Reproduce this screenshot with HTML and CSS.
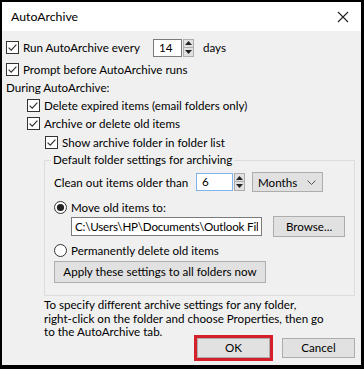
FILE: index.html
```html
<!doctype html>
<html>
  <head>
    <link rel="stylesheet" href="styles.css">
  </head>
  <body>
    <div class="dialog">
      <div class="titlebar">
        <span class="title">AutoArchive</span>
        <svg class="close" width="12" height="12" viewBox="0 0 12 12">
          <path d="M1 1 L11 11 M11 1 L1 11" stroke="#222" stroke-width="1.1" fill="none"/>
        </svg>
      </div>

      <div class="content">
        <div class="row r1">
          <svg class="check" width="13" height="13" viewBox="0 0 13 13"><rect x="0.5" y="0.5" width="12" height="12" fill="#fff" stroke="#333"/><path d="M2.6 6.6 L5.2 9.2 L10.4 3.6" stroke="#333" stroke-width="1.2" fill="none"/></svg>
          <span class="label w-run">Run AutoArchive every</span>
          <span class="spin">
            <span class="spin-box w-days">14</span>
            <span class="spin-btns">
              <span class="spin-btn"><svg width="7" height="4" viewBox="0 0 7 4"><path d="M0 4 L3.5 0 L7 4 Z" fill="#222"/></svg></span>
              <span class="spin-btn"><svg width="7" height="4" viewBox="0 0 7 4"><path d="M0 0 L3.5 4 L7 0 Z" fill="#222"/></svg></span>
            </span>
          </span>
          <span class="label after-spin">days</span>
        </div>

        <div class="row r2">
          <svg class="check" width="13" height="13" viewBox="0 0 13 13"><rect x="0.5" y="0.5" width="12" height="12" fill="#fff" stroke="#333"/><path d="M2.6 6.6 L5.2 9.2 L10.4 3.6" stroke="#333" stroke-width="1.2" fill="none"/></svg>
          <span class="label">Prompt before AutoArchive runs</span>
        </div>

        <div class="row r3">
          <span class="text">During AutoArchive:</span>
        </div>

        <div class="row r4 indent1">
          <svg class="check" width="13" height="13" viewBox="0 0 13 13"><rect x="0.5" y="0.5" width="12" height="12" fill="#fff" stroke="#333"/><path d="M2.6 6.6 L5.2 9.2 L10.4 3.6" stroke="#333" stroke-width="1.2" fill="none"/></svg>
          <span class="label">Delete expired items (email folders only)</span>
        </div>

        <div class="row r5 indent1">
          <svg class="check" width="13" height="13" viewBox="0 0 13 13"><rect x="0.5" y="0.5" width="12" height="12" fill="#fff" stroke="#333"/><path d="M2.6 6.6 L5.2 9.2 L10.4 3.6" stroke="#333" stroke-width="1.2" fill="none"/></svg>
          <span class="label">Archive or delete old items</span>
        </div>

        <div class="row r6 indent2">
          <svg class="check" width="13" height="13" viewBox="0 0 13 13"><rect x="0.5" y="0.5" width="12" height="12" fill="#fff" stroke="#333"/><path d="M2.6 6.6 L5.2 9.2 L10.4 3.6" stroke="#333" stroke-width="1.2" fill="none"/></svg>
          <span class="label">Show archive folder in folder list</span>
        </div>

        <fieldset class="group">
          <legend>Default folder settings for archiving</legend>

          <div class="row g-clean">
            <span class="text w-clean">Clean out items older than</span>
            <span class="spin">
              <span class="spin-box focus w-months">6</span>
              <span class="spin-btns">
                <span class="spin-btn"><svg width="7" height="4" viewBox="0 0 7 4"><path d="M0 4 L3.5 0 L7 4 Z" fill="#222"/></svg></span>
                <span class="spin-btn"><svg width="7" height="4" viewBox="0 0 7 4"><path d="M0 0 L3.5 4 L7 0 Z" fill="#222"/></svg></span>
              </span>
            </span>
            <span class="select">
              <span>Months</span>
              <svg width="9" height="5" viewBox="0 0 9 5"><path d="M0.5 0.5 L4.5 4.5 L8.5 0.5" stroke="#555" fill="none"/></svg>
            </span>
          </div>

          <div class="row g-move">
            <svg class="radio" width="13" height="13" viewBox="0 0 13 13"><circle cx="6.5" cy="6.5" r="6" fill="#fff" stroke="#333"/><circle cx="6.5" cy="6.5" r="3.6" fill="#222"/></svg>
            <span class="label">Move old items to:</span>
          </div>

          <div class="row g-path">
            <input class="path" type="text" value="C:\Users\HP\Documents\Outlook Files\archive.pst" readonly>
            <span class="button browse">Browse...</span>
          </div>

          <div class="row g-perm">
            <svg class="radio" width="13" height="13" viewBox="0 0 13 13"><circle cx="6.5" cy="6.5" r="6" fill="#fff" stroke="#333"/></svg>
            <span class="label">Permanently delete old items</span>
          </div>

          <div class="button apply">Apply these settings to all folders now</div>
        </fieldset>

        <p class="note">
          To specify different archive settings for any folder,<br>
          right-click on the folder and choose Properties, then go<br>
          to the AutoArchive tab.
        </p>

        <div class="actions">
          <span class="button action ok">OK</span>
          <span class="button action">Cancel</span>
        </div>
      </div>
    </div>
  </body>
</html>
```

FILE: styles.css
```css
body {
  margin: 0;
  background: #000;
}

.dialog {
  width: 364px;
  height: 369px;
  box-sizing: border-box;
  border-style: solid;
  border-color: #000;
  border-width: 2px 3px 4px 2px;
  background: #f0f0f0;
  font-family: Lato, "Noto Sans", sans-serif;
  font-size: 11.6px;
  color: #000;
  overflow: hidden;
}

.titlebar {
  height: 29px;
  background: #fff;
  display: flex;
  align-items: center;
  padding: 0 12px 0 9px;
}

.title {
  font-size: 12.3px;
}

.close {
  margin-left: auto;
}

.content {
  padding: 6px 4px 0 4px;
}

.row {
  display: flex;
  align-items: center;
  height: 18px;
  white-space: nowrap;
}

.check, .radio {
  flex: none;
}

.label {
  margin-left: 4px;
}

.r1 { height: 21px; }
.r2 { margin-top: 2px; height: 19px; }
.r3 { height: 17px; }
.r5 { height: 19px; }
.r6 { height: 19px; }

.indent1 { margin-left: 21px; }
.indent2 { margin-left: 39px; }

.w-run {
  width: 130px;
  margin-left: 4px;
}

.spin {
  display: flex;
  align-items: center;
}

.spin-box {
  height: 18px;
  box-sizing: border-box;
  border: 1px solid #7a7a7a;
  background: #fff;
  padding: 0 5px;
  line-height: 16px;
}

.spin-box.focus {
  border-color: #7eb4ea;
}

.w-days { width: 29px; }
.w-months { width: 37px; }

.spin-btns {
  display: flex;
  flex-direction: column;
  margin-left: 1px;
}

.spin-btn {
  width: 11px;
  height: 9px;
  box-sizing: border-box;
  border: 1px solid #adadad;
  background: #e1e1e1;
  display: flex;
  align-items: center;
  justify-content: center;
}

.spin-btn + .spin-btn {
  margin-top: -1px;
  height: 10px;
}

.after-spin {
  margin-left: 9px;
}

.group {
  margin: 0 2px 0 38px;
  padding: 4px 8px 12px 9px;
  border: 1px solid #dcdcdc;
}

.group legend {
  padding: 0 2px;
  margin-left: -3px;
  line-height: 16px;
}

.g-clean { height: 20px; }

.w-clean { width: 142px; }

.select {
  margin-left: 7px;
  width: 71px;
  height: 20px;
  box-sizing: border-box;
  border: 1px solid #adadad;
  background: #e1e1e1;
  display: flex;
  align-items: center;
  justify-content: space-between;
  padding: 0 6px 0 5px;
}

.g-move { margin-top: 6px; }

.g-path {
  height: 21px;
  margin-left: 17px;
}

.path {
  width: 191px;
  height: 19px;
  box-sizing: border-box;
  border: 1px solid #7a7a7a;
  background: #fff;
  padding: 0 3px;
  margin: 0;
  font: inherit;
  letter-spacing: -0.2px;
  color: #000;
  outline: none;
}

.button {
  box-sizing: border-box;
  border: 1px solid #adadad;
  background: #e1e1e1;
  text-align: center;
}

.browse {
  margin-left: 11px;
  width: 72px;
  height: 21px;
  line-height: 19px;
}

.g-perm { margin-top: 4px; }

.apply {
  margin-top: 2px;
  width: 212px;
  height: 22px;
  line-height: 20px;
}

.note {
  margin: 2px 0 0 38px;
  line-height: 13.5px;
}

.actions {
  display: flex;
  justify-content: flex-end;
  gap: 12px;
  margin-top: -1px;
  margin-right: 2px;
}

.action {
  width: 73px;
  height: 20px;
  line-height: 18px;
}

.ok {
  outline: 3px solid #d4202a;
  outline-offset: 0;
}
```
